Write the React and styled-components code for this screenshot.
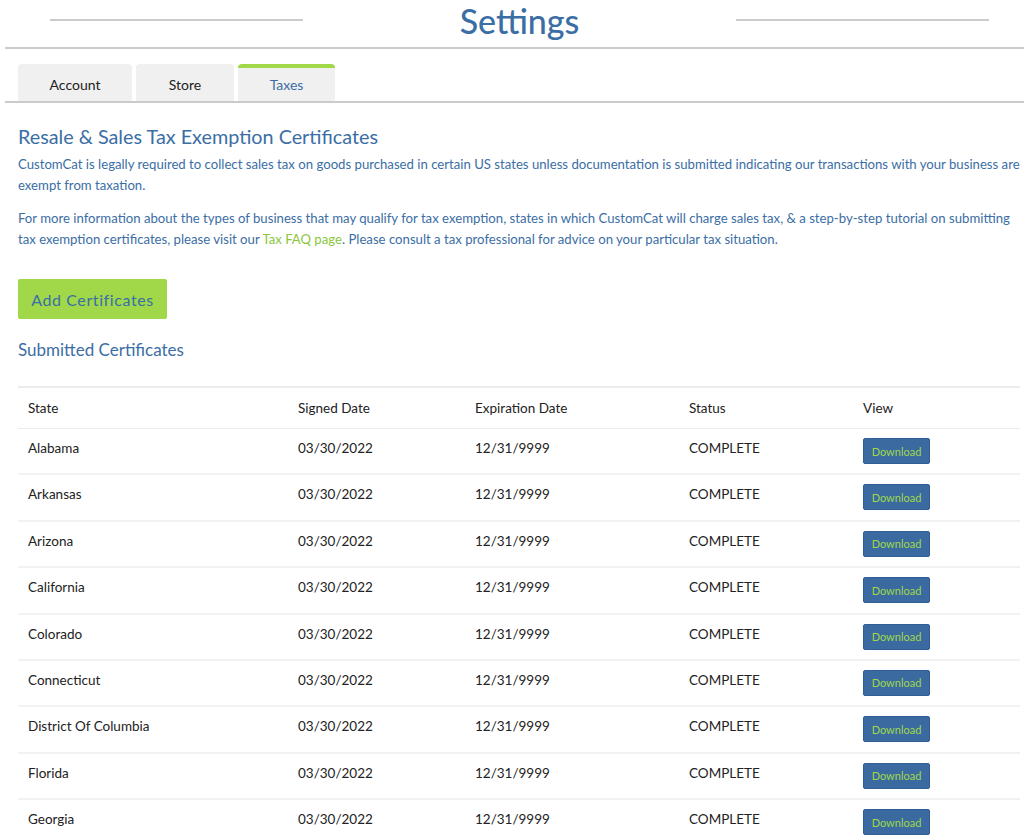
import React from 'react'
import styled, { createGlobalStyle } from 'styled-components'

const BLUE = '#3b6ea5'
const GREEN = '#a0d84a'

const rows = [
  'Alabama',
  'Arkansas',
  'Arizona',
  'California',
  'Colorado',
  'Connecticut',
  'District Of Columbia',
  'Florida',
  'Georgia',
]

const tabs = [
  { label: 'Account', width: 114 },
  { label: 'Store', width: 98 },
  { label: 'Taxes', width: 97, active: true },
]

function App() {
  return (
    <>
      <GlobalStyle />
      <Page>
        <TitleBar>
          <Rule />
          <Title>Settings</Title>
          <Rule />
        </TitleBar>
        <Tabs>
          {tabs.map(({ label, width, active }) => (
            <Tab key={label} $width={width} $active={active}>
              {label}
            </Tab>
          ))}
        </Tabs>
        <Content>
          <Heading>Resale &amp; Sales Tax Exemption Certificates</Heading>
          <Text>
            CustomCat is legally required to collect sales tax on goods purchased in certain US states unless
            documentation is submitted indicating our transactions with your business are exempt from taxation.
          </Text>
          <Text>
            For more information about the types of business that may qualify for tax exemption, states in which
            CustomCat will charge sales tax, &amp; a step-by-step tutorial on submitting tax exemption certificates,
            please visit our <Link>Tax FAQ page</Link>. Please consult a tax professional for advice on your
            particular tax situation.
          </Text>
          <AddButton>Add Certificates</AddButton>
          <SubHeading>Submitted Certificates</SubHeading>
          <Table>
            <HeadRow>
              <span>State</span>
              <span>Signed Date</span>
              <span>Expiration Date</span>
              <span>Status</span>
              <span>View</span>
            </HeadRow>
            {rows.map((state) => (
              <Row key={state}>
                <span>{state}</span>
                <span>03/30/2022</span>
                <span>12/31/9999</span>
                <span>COMPLETE</span>
                <span>
                  <DownloadButton>Download</DownloadButton>
                </span>
              </Row>
            ))}
          </Table>
        </Content>
      </Page>
    </>
  )
}

export default App

const GlobalStyle = createGlobalStyle`
  html, body {
    margin: 0;
    padding: 0;
    background: #fff;
    font-family: Lato, "Liberation Sans", sans-serif;
  }
  * { box-sizing: border-box; }
`
const Page = styled.div`
  width: 1024px;
  height: 839px;
  overflow: hidden;
`
const TitleBar = styled.div`
  height: 49px;
  margin-left: 5px;
  border-bottom: 2px solid #c9cbcc;
  display: flex;
  align-items: center;
  padding: 0 35px 5px 45px;
`
const Rule = styled.div`
  width: 253px;
  height: 2px;
  background: #c9cbcc;
  margin-top: -2px;
`
const Title = styled.h1`
  flex: 1;
  margin: 0;
  text-align: center;
  color: ${BLUE};
  font-size: 34px;
  font-weight: 500;
  line-height: 40px;
`
const Tabs = styled.div`
  display: flex;
  gap: 4px;
  margin: 15px 0 0 5px;
  padding-left: 13px;
  border-bottom: 2px solid #c9cbcc;
`
const Tab = styled.div`
  width: ${(p) => p.$width}px;
  height: 37px;
  display: flex;
  align-items: center;
  justify-content: center;
  background: #f0f0f0;
  border-radius: 4px 4px 0 0;
  border-top: 4px solid ${(p) => (p.$active ? GREEN : '#f0f0f0')};
  color: ${(p) => (p.$active ? BLUE : '#222')};
  font-size: 14px;
`
const Content = styled.div`
  padding: 20px 0 0 18px;
`
const Heading = styled.h2`
  margin: 0 0 5px;
  color: ${BLUE};
  font-size: 19.8px;
  font-weight: 400;
  line-height: 26px;
`
const Text = styled.p`
  max-width: 1004px;
  margin: 0 0 12px;
  color: ${BLUE};
  font-size: 13.16px;
  line-height: 21px;
`
const Link = styled.a`
  color: #8cc63f;
  cursor: pointer;
`
const AddButton = styled.button`
  display: block;
  margin-top: 29px;
  width: 149px;
  height: 40px;
  border: none;
  border-radius: 2px;
  background: ${GREEN};
  color: ${BLUE};
  font-family: inherit;
  font-size: 16px;
  letter-spacing: 0.6px;
  cursor: pointer;
`
const SubHeading = styled.h3`
  margin: 20px 0 0;
  color: ${BLUE};
  font-size: 17px;
  font-weight: 400;
  line-height: 22px;
`
const Table = styled.div`
  width: 1002px;
  margin-top: 25px;
  border-top: 2px solid #ebecee;
`
const HeadRow = styled.div`
  display: grid;
  grid-template-columns: 270px 177px 214px 174px 1fr;
  align-items: center;
  height: 41px;
  padding-left: 10px;
  border-bottom: 1px solid #ebecee;
  color: #222;
  font-size: 13.5px;
`
const Row = styled(HeadRow)`
  align-items: start;
  height: 46.4px;
  padding-top: 9px;
  line-height: 21px;
  border-bottom: 2px solid #f2f2f2;
`
const DownloadButton = styled.button`
  width: 67px;
  height: 26px;
  border: 1px solid #2f5f94;
  border-radius: 2px;
  background: #3a6aa0;
  color: ${GREEN};
  font-family: inherit;
  font-size: 11px;
  padding: 0;
  cursor: pointer;
`
